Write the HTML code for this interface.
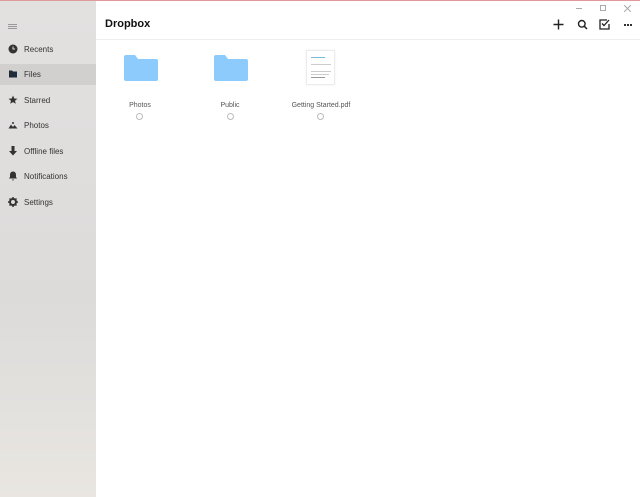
<!DOCTYPE html>
<html><head><style>
*{margin:0;padding:0;box-sizing:border-box}
body{width:640px;height:497px;overflow:hidden;background:#fff;font-family:"Liberation Sans",sans-serif;position:relative}
.top{position:absolute;left:0;top:0;width:640px;height:1px;background:#e09a9a}
.side{position:absolute;left:0;top:1px;width:96px;height:496px;background:linear-gradient(#e3e1e0,#dcdbda 60%,#e9e6e1)}
.item{position:absolute;left:0;width:96px;height:21px;font-size:8px;color:#333}
.item span{position:absolute;left:24px;top:6px}
.item svg{position:absolute;left:8px;top:5px}
.sel{background:#d2d0cf}
.t{position:absolute;font-size:7px;color:#555;text-align:center;width:90px}
.c{position:absolute;width:7px;height:7px;border:1px solid #bbb;border-radius:50%}
</style></head><body>
<div class="top"></div>
<div class="side">
<div style="position:absolute;left:8px;top:23px;width:9px;height:1px;background:#999;box-shadow:0 2px 0 #999,0 4px 0 #999"></div>
<div class="item" style="top:38px"><svg width="10" height="10"><circle cx="5" cy="5" r="4.5" fill="#333"/><path d="M5 2.5V5h2" stroke="#ddd" stroke-width="1" fill="none"/></svg><span>Recents</span></div>
<div class="item sel" style="top:63px"><svg width="10" height="10"><path d="M1 1.5h3l1 1h4v6H1z" fill="#1f2a3a"/></svg><span>Files</span></div>
<div class="item" style="top:89px"><svg width="10" height="10"><path d="M5 0.5l1.3 3 3.2.2-2.5 2 .8 3.1L5 7.1 2.2 8.8 3 5.7.5 3.7l3.2-.2z" fill="#333"/></svg><span>Starred</span></div>
<div class="item" style="top:114px"><svg width="10" height="10"><path d="M0.5 8.5l2.5-4 2 2.5 1.5-2 3 3.5z" fill="#333"/><circle cx="5" cy="3" r="1" fill="#333"/></svg><span>Photos</span></div>
<div class="item" style="top:140px"><svg width="10" height="10"><path d="M3.5 0h3v5h2.5L5 9.5 1 5h2.5z" fill="#333"/></svg><span>Offline files</span></div>
<div class="item" style="top:165px"><svg width="10" height="10"><path d="M5 0.5c2 0 3 1.5 3 3.5v2l1 1.5H1L2 6V4c0-2 1-3.5 3-3.5zM4 8.5h2a1 1 0 0 1-2 0z" fill="#333"/></svg><span>Notifications</span></div>
<div class="item" style="top:191px"><svg width="10" height="10"><circle cx="5" cy="5" r="3" fill="none" stroke="#333" stroke-width="2"/><path d="M5 0v2M5 8v2M0 5h2M8 5h2M1.5 1.5l1.4 1.4M7.1 7.1l1.4 1.4M1.5 8.5l1.4-1.4M7.1 2.9l1.4-1.4" stroke="#333" stroke-width="1.5"/></svg><span>Settings</span></div>
</div>
<div style="position:absolute;left:105px;top:18px;font-size:11px;font-weight:bold;color:#111">Dropbox</div>
<div style="position:absolute;left:96px;top:39px;width:544px;height:1px;background:#eee"></div>
<div style="position:absolute;left:576px;top:8px;width:6px;height:1px;background:#aaa"></div>
<div style="position:absolute;left:600px;top:5px;width:6px;height:6px;border:1px solid #aaa"></div>
<svg style="position:absolute;left:624px;top:5px" width="7" height="7"><path d="M0 0L7 7M7 0L0 7" stroke="#aaa"/></svg>
<svg style="position:absolute;left:553px;top:19px" width="11" height="11"><path d="M5.5 0.5v10M0.5 5.5h10" stroke="#222" stroke-width="1.4"/></svg>
<svg style="position:absolute;left:577px;top:19px" width="11" height="11"><circle cx="4.8" cy="4.8" r="3.3" fill="none" stroke="#222" stroke-width="1.4"/><path d="M7.2 7.2L10 10" stroke="#222" stroke-width="1.5"/></svg>
<svg style="position:absolute;left:599px;top:19px" width="11" height="11"><path d="M8 1H1v9h9V5" fill="none" stroke="#222" stroke-width="1.3"/><path d="M3 4.5l2 2L10 1" fill="none" stroke="#222" stroke-width="1.3"/></svg>
<div style="position:absolute;left:624px;top:24px;width:2px;height:2px;background:#333;box-shadow:3px 0 #333,6px 0 #333"></div>
<svg style="position:absolute;left:124px;top:55px" width="34" height="26"><path d="M0 2a2 2 0 0 1 2-2h9l3 4h18a2 2 0 0 1 2 2v18a2 2 0 0 1-2 2H2a2 2 0 0 1-2-2z" fill="#8ecbfd"/></svg>
<svg style="position:absolute;left:214px;top:55px" width="34" height="26"><path d="M0 2a2 2 0 0 1 2-2h9l3 4h18a2 2 0 0 1 2 2v18a2 2 0 0 1-2 2H2a2 2 0 0 1-2-2z" fill="#8ecbfd"/></svg>
<div style="position:absolute;left:306px;top:50px;width:29px;height:35px;background:#fff;border:1px solid #ececec;box-shadow:0 0 2px #eee">
<div style="position:absolute;left:4px;top:6px;width:14px;height:1px;background:#7ab9d8"></div>
<div style="position:absolute;left:4px;top:13px;width:20px;height:1px;background:#ccc"></div>
<div style="position:absolute;left:4px;top:20px;width:20px;height:1px;background:#ccc"></div>
<div style="position:absolute;left:4px;top:23px;width:18px;height:1px;background:#ccc"></div>
<div style="position:absolute;left:4px;top:26px;width:14px;height:1px;background:#999"></div>
</div>
<div class="t" style="left:95px;top:102px">Photos</div>
<div class="t" style="left:185px;top:102px">Public</div>
<div class="t" style="left:276px;top:102px">Getting Started.pdf</div>
<div class="c" style="left:136px;top:113px"></div>
<div class="c" style="left:227px;top:113px"></div>
<div class="c" style="left:317px;top:113px"></div>
</body></html>
